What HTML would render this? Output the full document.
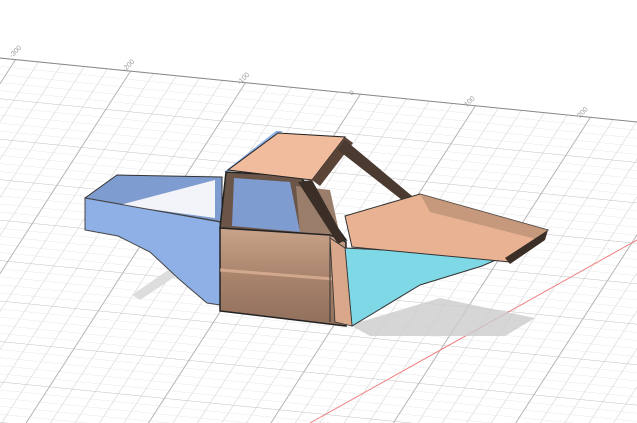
<!DOCTYPE html>
<html><head><meta charset="utf-8"><style>
html,body{margin:0;padding:0;background:#fff;}
svg{display:block;}
text{font-family:"Liberation Sans",sans-serif;font-size:7px;fill:#999;}
</style></head><body>
<svg width="637" height="423" viewBox="0 0 637 423" xmlns="http://www.w3.org/2000/svg">
<defs>
<pattern id="minor" patternUnits="userSpaceOnUse" width="1" height="1" patternTransform="matrix(23,2.3,-4.9,7.6,245,82.6)">
<path d="M0 0H1M0 0V1" stroke="#dcdcdc" stroke-width="0.07" fill="none"/>
</pattern>
<pattern id="major" patternUnits="userSpaceOnUse" width="5" height="5" patternTransform="matrix(23,2.3,-4.9,7.6,245,82.6)">
<path d="M0 0H5M0 0V5" stroke="#b4b4b4" stroke-width="0.09" fill="none"/>
</pattern>
<clipPath id="floor"><polygon points="0,58 637,122 637,423 0,423"/></clipPath>
<linearGradient id="tan" x1="0" y1="0" x2="0" y2="1">
<stop offset="0" stop-color="#c9a28a"/><stop offset="0.5" stop-color="#a9836b"/><stop offset="1" stop-color="#8f6f5c"/>
</linearGradient>
</defs>
<g clip-path="url(#floor)">
<rect width="637" height="423" fill="url(#minor)"/>
<rect width="637" height="423" fill="url(#major)"/>
</g>
<line x1="0" y1="58" x2="637" y2="122" stroke="#888" stroke-width="1"/>
<line x1="310" y1="423" x2="637" y2="240" stroke="#f08080" stroke-width="1"/>
<text x="12" y="58" transform="rotate(-45 12 58)">-300</text>
<text x="125" y="72" transform="rotate(-45 125 72)">-200</text>
<text x="240" y="85" transform="rotate(-45 240 85)">-100</text>
<text x="352" y="96" transform="rotate(-45 352 96)">0</text>
<text x="467" y="107" transform="rotate(-45 467 107)">100</text>
<text x="580" y="118" transform="rotate(-45 580 118)">200</text>
<!-- shadows -->
<polygon points="350,325 440,298 535,318 505,336 370,336" fill="#ccc" opacity="0.8"/>
<polygon points="132,295 168,270 176,276 140,300" fill="#ddd"/>
<!-- blue bed -->
<polygon points="85,198 117,175 222,177 222,222" fill="#7f9cd0" stroke="#333" stroke-width="1"/>
<polygon points="120,205 215,180 215,218" fill="#f2f4fa"/>
<polygon points="85,198 220,222 220,305 207,303 180,280 150,252 118,236 85,230" fill="#8fb0e6" stroke="#444" stroke-width="1"/>
<polygon points="224,172 276,131 283,131 232,170" fill="#8fb0e6"/>
<!-- cab frame/window -->
<polygon points="226,172 300,176 346,240 220,228" fill="#6a5548" stroke="#222" stroke-width="1.5"/>
<polygon points="234,178 290,182 300,232 232,226" fill="#7f9cd0"/>
<polygon points="296,186 330,190 340,236 300,234" fill="#9a7d6a"/>
<!-- door -->
<polygon points="220,228 330,235 346,242 346,326 220,311" fill="url(#tan)" stroke="#222" stroke-width="1.5"/>
<line x1="220" y1="270" x2="346" y2="280" stroke="#e4b89c" stroke-width="3" opacity="0.7"/>
<line x1="330" y1="235" x2="330" y2="322" stroke="#333" stroke-width="1"/>
<!-- roof -->
<polygon points="228,170 278,133 345,137 312,180" fill="#f0bc9d" stroke="#222" stroke-width="1"/>
<polygon points="312,180 345,137 353,143 320,186" fill="#5a4438"/>
<polygon points="345,140 412,196 402,200 338,150" fill="#4a3a30"/>
<polygon points="298,182 312,180 345,240 338,244" fill="#3a2e26"/>
<!-- fender cyan -->
<polygon points="345,248 505,256 482,266 420,285 352,326" fill="#7fd8e6" stroke="#333" stroke-width="1"/>
<!-- hood -->
<polygon points="345,216 420,194 548,230 510,262 352,247" fill="#e9b293" stroke="#333" stroke-width="1"/>
<polygon points="420,194 548,230 540,240 430,212" fill="#b68e74" opacity="0.7"/>
<polygon points="505,258 548,230 545,240 510,264" fill="#3a2e26"/>
<polygon points="330,238 345,248 352,326 335,322" fill="#d9a88a" stroke="#333" stroke-width="0.8"/>
</svg>
</body></html>
